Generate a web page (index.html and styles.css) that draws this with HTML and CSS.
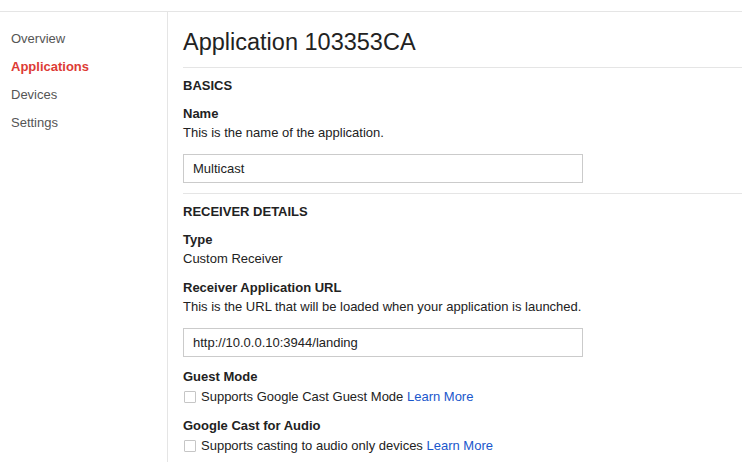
FILE: index.html
```html
<!DOCTYPE html>
<html lang="en">
<head>
<meta charset="utf-8">
<title>Application 103353CA</title>
<link rel="stylesheet" href="styles.css">
</head>
<body>
<div class="topbar"></div>
<div class="layout">
  <nav class="sidebar">
    <a class="nav-item" href="#">Overview</a>
    <a class="nav-item active" href="#">Applications</a>
    <a class="nav-item" href="#">Devices</a>
    <a class="nav-item" href="#">Settings</a>
  </nav>
  <main class="main">
    <h1 class="title">Application 103353CA</h1>
    <section class="section">
      <h2 class="section-title">BASICS</h2>
      <div class="field">
        <div class="label">Name</div>
        <div class="text">This is the name of the application.</div>
        <div class="input">Multicast</div>
      </div>
    </section>
    <section class="section">
      <h2 class="section-title">RECEIVER DETAILS</h2>
      <div class="field">
        <div class="label">Type</div>
        <div class="text">Custom Receiver</div>
      </div>
      <div class="field">
        <div class="label">Receiver Application URL</div>
        <div class="text">This is the URL that will be loaded when your application is launched.</div>
        <div class="input">http://10.0.0.10:3944/landing</div>
      </div>
      <div class="field">
        <div class="label">Guest Mode</div>
        <div class="check-row"><span class="checkbox"></span><span>Supports Google Cast Guest Mode <a class="link" href="#">Learn More</a></span></div>
      </div>
      <div class="field">
        <div class="label">Google Cast for Audio</div>
        <div class="check-row"><span class="checkbox"></span><span>Supports casting to audio only devices <a class="link" href="#">Learn More</a></span></div>
      </div>
    </section>
  </main>
</div>
</body>
</html>
```

FILE: styles.css
```css
html, body {
  margin: 0;
  padding: 0;
  background: #fff;
}
body {
  font-family: "Liberation Sans", Arial, sans-serif;
  font-size: 13px;
  line-height: 19px;
  color: #222;
  height: 462px;
  overflow: hidden;
}
.topbar {
  height: 11px;
  border-bottom: 1px solid #e5e5e5;
}
.layout {
  display: flex;
  height: 450px;
}
.sidebar {
  width: 167px;
  flex: 0 0 167px;
  border-right: 1px solid #e5e5e5;
  padding-top: 13px;
  display: flex;
  flex-direction: column;
  box-sizing: border-box;
  width: 168px;
  flex-basis: 168px;
}
.nav-item {
  display: block;
  padding-left: 11px;
  line-height: 28px;
  color: #555;
  text-decoration: none;
}
.nav-item.active {
  color: #dd3b35;
  font-weight: bold;
}
.main {
  flex: 1;
  padding-left: 15px;
}
.title {
  margin: 16px 0 0;
  font-size: 23.5px;
  font-weight: normal;
  line-height: 28px;
  color: #222;
  padding-bottom: 11px;
  border-bottom: 1px solid #e5e5e5;
}
.section {
  padding: 8px 0 10px;
  border-bottom: 1px solid #e5e5e5;
}
.section:last-child {
  border-bottom: none;
}
.section-title {
  margin: 0 0 9px;
  font-size: 13px;
  line-height: 19px;
  font-weight: bold;
  color: #222;
}
.field {
  margin-bottom: 10px;
}
.field:last-child {
  margin-bottom: 0;
}
.label {
  font-weight: bold;
  color: #222;
}
.text {
  color: #222;
}
.input {
  margin-top: 12px;
  width: 400px;
  height: 29px;
  box-sizing: border-box;
  border: 1px solid #cbcbcb;
  padding-left: 9px;
  line-height: 27px;
  color: #222;
}
.check-row {
  display: flex;
  align-items: center;
  margin-top: 1px;
  line-height: 19px;
}
.checkbox {
  width: 12px;
  height: 12px;
  box-sizing: border-box;
  border: 1px solid #c6c6c6;
  border-radius: 1px;
  margin-left: 1px;
  margin-right: 5px;
  background: #fff;
  flex: 0 0 auto;
}
.link {
  color: #1a57cc;
  text-decoration: none;
}
```
